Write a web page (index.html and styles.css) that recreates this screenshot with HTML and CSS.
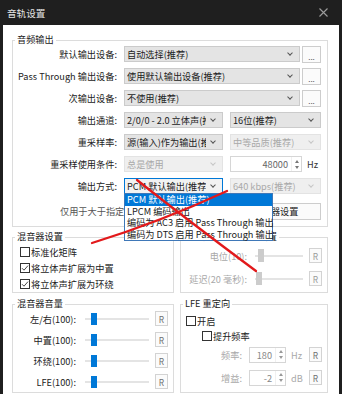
FILE: index.html
```html
<!DOCTYPE html>
<html lang="zh-CN">
<head>
    <meta charset="UTF-8">
    <title>音轨设置</title>
    <link rel="stylesheet" href="styles.css">
</head>
<body>
<div class="window">
    <div class="titlebar">
        <span>音轨设置</span>
        <svg class="close" width="9" height="9" viewBox="0 0 9 9"><path d="M0.5 0.5L8.5 8.5M8.5 0.5L0.5 8.5"/></svg>
    </div>
    <div class="content">
        <div class="group">
            <div class="caption">音频输出</div>
            <div class="group-body output">
                <div class="row">
                    <span class="label">默认输出设备:</span>
                    <div class="combo w-full"><span>自动选择(推荐)</span></div>
                    <button class="more">...</button>
                </div>
                <div class="row">
                    <span class="label">Pass Through 输出设备:</span>
                    <div class="combo w-full"><span>使用默认输出设备(推荐)</span></div>
                    <button class="more">...</button>
                </div>
                <div class="row">
                    <span class="label">次输出设备:</span>
                    <div class="combo w-full"><span>不使用(推荐)</span></div>
                    <button class="more">...</button>
                </div>
                <div class="row">
                    <span class="label">输出通道:</span>
                    <div class="combo w-half"><span>2/0/0 - 2.0 立体声(推荐)</span></div>
                    <div class="combo w-right"><span>16位(推荐)</span></div>
                </div>
                <div class="row">
                    <span class="label">重采样率:</span>
                    <div class="combo w-half"><span>源(输入)作为输出(推荐)</span></div>
                    <div class="combo w-right disabled"><span>中等品质(推荐)</span></div>
                </div>
                <div class="row">
                    <span class="label">重采样使用条件:</span>
                    <div class="combo w-half disabled"><span>总是使用</span></div>
                    <div class="spin w-rate">
                        <span class="value">48000</span>
                        <span class="arrows"><i class="up"></i><i class="down"></i></span>
                    </div>
                    <span class="unit">Hz</span>
                </div>
                <div class="row">
                    <span class="label">输出方式:</span>
                    <div class="combo w-half focus"><span>PCM 默认输出(推荐)</span></div>
                    <div class="combo w-right disabled"><span>640 kbps(推荐)</span></div>
                </div>
                <div class="row last">
                    <span class="note">仅用于大于指定声道数的输入</span>
                    <button class="plain">编码器设置</button>
                </div>
            </div>
        </div>

        <div class="pair first">
            <div class="group mixer">
                <div class="caption">混音器设置</div>
                <div class="group-body checks">
                    <div class="check-row"><span class="check"></span>标准化矩阵</div>
                    <div class="check-row"><span class="check"><svg viewBox="0 0 8 8"><path d="M1 4.2L3 6.2L7 1.6"/></svg></span>将立体声扩展为中置</div>
                    <div class="check-row"><span class="check"><svg viewBox="0 0 8 8"><path d="M1 4.2L3 6.2L7 1.6"/></svg></span>将立体声扩展为环绕</div>
                </div>
            </div>
            <div class="group side disabled-group">
                <div class="caption">立体声扩展为中置设置</div>
                <div class="group-body center">
                    <div class="row tall">
                        <span class="label">电位(10):</span>
                        <div class="slider"><i class="thumb off" style="margin-left: 3px"></i></div>
                        <span class="rbtn">R</span>
                    </div>
                    <div class="row tall">
                        <span class="label">延迟(20 毫秒):</span>
                        <div class="slider"><i class="thumb off" style="margin-left: 1px"></i></div>
                        <span class="rbtn">R</span>
                    </div>
                </div>
            </div>
        </div>

        <div class="pair second">
            <div class="group mixer">
                <div class="caption">混音器音量</div>
                <div class="group-body volume">
                    <div class="row vol">
                        <span class="label">左/右(100):</span>
                        <div class="slider"><i class="thumb" style="margin-left: 6px"></i></div>
                        <span class="rbtn">R</span>
                    </div>
                    <div class="row vol">
                        <span class="label">中置(100):</span>
                        <div class="slider"><i class="thumb" style="margin-left: 6px"></i></div>
                        <span class="rbtn">R</span>
                    </div>
                    <div class="row vol">
                        <span class="label">环绕(100):</span>
                        <div class="slider"><i class="thumb" style="margin-left: 6px"></i></div>
                        <span class="rbtn">R</span>
                    </div>
                    <div class="row vol">
                        <span class="label">LFE(100):</span>
                        <div class="slider"><i class="thumb" style="margin-left: 6px"></i></div>
                        <span class="rbtn">R</span>
                    </div>
                </div>
            </div>
            <div class="group side">
                <div class="caption">LFE 重定向</div>
                <div class="group-body lfe">
                    <div class="check-row lfe-on"><span class="check"></span>开启</div>
                    <div class="check-row lfe-boost"><span class="check"></span>提升频率</div>
                    <div class="row tall dim">
                        <span class="label">频率:</span>
                        <div class="spin w-small">
                            <span class="value">180</span>
                            <span class="arrows"><i class="up"></i><i class="down"></i></span>
                        </div>
                        <span class="unit">Hz</span>
                        <span class="rbtn">R</span>
                    </div>
                    <div class="row tall dim">
                        <span class="label">增益:</span>
                        <div class="spin w-small">
                            <span class="value">-2</span>
                            <span class="arrows"><i class="up"></i><i class="down"></i></span>
                        </div>
                        <span class="unit">dB</span>
                        <span class="rbtn">R</span>
                    </div>
                </div>
            </div>
        </div>
    </div>
</div>

<div class="dropdown">
    <div class="sel">PCM 默认输出(推荐)</div>
    <div>LPCM 编码输出</div>
    <div>编码为 AC3 启用 Pass Through 输出</div>
    <div>编码为 DTS 启用 Pass Through 输出</div>
</div>

<svg class="scribble" width="342" height="394" viewBox="0 0 342 394">
    <path d="M137 180Q190 222 256 271"/>
    <path d="M92 243Q160 222 227 191"/>
</svg>
</body>
</html>
```

FILE: styles.css
```css
* { box-sizing: border-box; }
body { margin: 0; position: relative; width: 342px; height: 394px; overflow: hidden; background: #1f1f1f; font-family: "Noto Sans CJK SC", sans-serif; font-size: 9.2px; line-height: 12px; color: #222; }
button { font: inherit; margin: 0; padding: 0; cursor: default; }

.window { margin: 0 3px; height: 394px; display: flex; flex-direction: column; }
.titlebar { height: 25px; flex: none; display: flex; align-items: center; justify-content: space-between; padding: 0 11px 0 4px; color: #e4e4e4; font-size: 9.6px; }
.close path { stroke: #9c9c9c; stroke-width: 1.1; fill: none; }
.content { flex: 1; background: #fff; padding: 15px 11px 0 9px; }

.group { border: 1px solid #dcdcdc; }
.caption { display: table; margin: -8px 0 -4px 2px; padding: 0 2px; background: #fff; line-height: 12px; white-space: nowrap; }

.row { display: flex; align-items: center; height: 22px; }
.label { flex: none; text-align: right; white-space: nowrap; }

/* audio output */
.output { padding: 2px 6px 4px 0; }
.output .label { width: 104px; margin-right: 7px; }
.row.last { margin-top: 3px; }
.note { flex: 1; min-width: 0; padding-left: 47px; white-space: nowrap; overflow: hidden; color: #555; }

.combo { flex: none; display: flex; align-items: center; height: 16px; padding: 0 7px 0 2px; border: 1px solid #cbcbcb; background: #e4e4e4; }
.combo span { flex: 1; min-width: 0; overflow: hidden; white-space: nowrap; }
.combo::after { content: ""; flex: none; width: 3px; height: 3px; margin: -2px 0 0 5px; border-right: 1px solid #555; border-bottom: 1px solid #555; transform: rotate(45deg); }
.combo.disabled { background: #efefef; border-color: #e3e3e3; color: #a9a9a9; }
.combo.disabled::after { border-color: #c6c6c6; }
.combo.focus { border-color: #0078d7; background: #f2f2f2; }
.w-full { width: 176px; }
.w-half { width: 99px; margin-right: 7px; }
.w-right { width: 91px; }

.more { width: 19px; height: 17px; margin-left: 2px; border: 1px solid #cdcdcd; background: #fbfbfb; color: #555; font-size: 8px; line-height: 8px; padding-top: 6px; }
.plain { width: 91px; height: 17px; margin-left: auto; border: 1px solid #cdcdcd; background: #fbfbfb; color: #222; }

.spin { flex: none; display: flex; height: 16px; border: 1px solid #d6d6d6; background: #fff; }
.spin .value { flex: 1; text-align: right; padding-right: 3px; line-height: 14px; color: #666; }
.arrows { width: 10px; display: flex; flex-direction: column; align-items: center; justify-content: center; gap: 3px; border-left: 1px solid #f0f0f0; }
.up { width: 0; height: 0; border-left: 2.5px solid transparent; border-right: 2.5px solid transparent; border-bottom: 3px solid #777; }
.down { width: 0; height: 0; border-left: 2.5px solid transparent; border-right: 2.5px solid transparent; border-top: 3px solid #777; }
.w-rate { width: 72px; }
.w-small { width: 37px; }
.unit { margin-left: 5px; color: #333; }

/* lower groups */
.pair { display: flex; gap: 6px; }
.pair.first { margin-top: 10px; }
.pair.second { margin-top: 11px; }
.mixer { width: 162px; flex: none; }
.side { flex: 1; }

.checks { padding: 6px 0 0 7px; }
.check-row { display: flex; align-items: center; height: 16px; white-space: nowrap; }
.check { flex: none; width: 10px; height: 10px; margin-right: 1px; border: 1px solid #333; display: flex; }
.check svg { width: 8px; height: 8px; }
.check path { fill: none; stroke: #333; stroke-width: 0.9; }

.center { padding: 6px 5px 2px 0; }
.row.tall { height: 23px; }
.center .label { width: 66px; margin-right: 8px; }
.center .slider { width: 48px; margin-right: 6px; }
.disabled-group .label { color: #a9a9a9; }
.disabled-group .rbtn { color: #999; }

.slider { flex: none; display: flex; align-items: center; height: 13px; background: linear-gradient(#e4e4e4, #e4e4e4) center / 100% 2px no-repeat; }
.thumb { width: 6px; height: 12px; background: #0078d7; }
.thumb.off { height: 13px; background: #cccccc; }
.rbtn { flex: none; width: 13px; height: 15px; display: flex; align-items: center; justify-content: center; border: 1px solid #d3d3d3; background: #fbfbfb; color: #6e6e6e; font-size: 8.4px; }

.volume { padding: 3px 5px 0 0; }
.row.vol { height: 21px; }
.volume .label { width: 63px; margin-right: 9px; }
.volume .slider { width: 64px; margin-right: 6px; }

.lfe { padding: 8px 5px 0 0; }
.check-row.lfe-on { height: 15px; padding-left: 5px; }
.check-row.lfe-boost { height: 15px; padding-left: 21px; }
.lfe .row.tall:first-of-type { margin-top: 1px; }
.lfe .label { width: 61px; margin-right: 7px; }
.lfe .rbtn { margin-left: auto; }
.dim .label, .dim .unit { color: #a9a9a9; }
.dim .spin .value { color: #888; }
.dim .up { border-bottom-color: #999; }
.dim .down { border-top-color: #999; }

/* open combo list */
.dropdown { position: absolute; left: 124px; top: 193px; width: 149px; border: 1px solid #3f78b8; background: #fff; }
.dropdown div { height: 11.5px; line-height: 11.5px; padding-left: 2px; white-space: nowrap; }
.dropdown .sel { background: #0078d7; color: #fff; }

/* red marker strokes */
.scribble { position: absolute; left: 0; top: 0; pointer-events: none; }
.scribble path { fill: none; stroke: #e2191b; stroke-width: 2.3; stroke-linecap: round; }
```
